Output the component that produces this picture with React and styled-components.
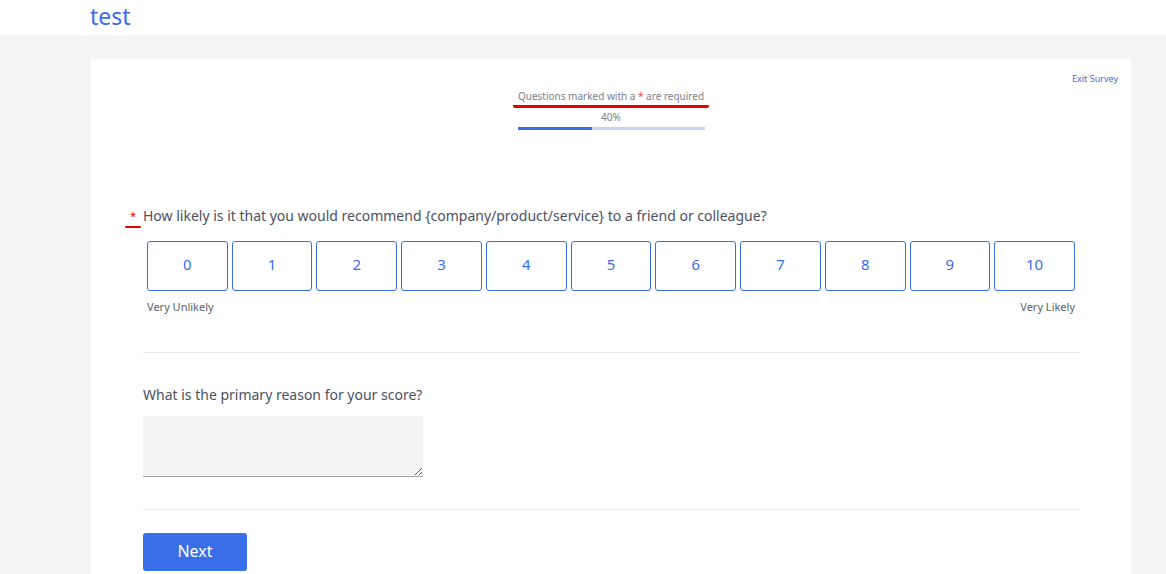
import React from "react";
import styled, { createGlobalStyle } from "styled-components";

const Global = createGlobalStyle`
  html, body { margin: 0; padding: 0; background: #f5f5f5; }
  body { font-family: "Noto Sans", "Open Sans", sans-serif; color: #4b5162; }
  * { box-sizing: border-box; }
`;

const BLUE = "#3a6ee8";

const Header = styled.header`
  height: 35px;
  background: #fff;
  padding-left: 90px;
  display: flex;
  align-items: center;
`;

const Title = styled.h1`
  margin: 0;
  font-size: 23px;
  font-weight: 400;
  color: ${BLUE};
  line-height: 1;
  margin-top: -3px;
`;

const Main = styled.main`
  padding: 24px 35px 0 91px;
`;

const Card = styled.section`
  background: #fff;
  min-height: 520px;
  position: relative;
  padding: 30px 52px 0 52px;
`;

const ExitLink = styled.a`
  position: absolute;
  top: 13px;
  right: 13px;
  font-size: 9px;
  color: ${BLUE};
  text-decoration: none;
`;

const Progress = styled.div`
  display: flex;
  flex-direction: column;
  align-items: center;
`;

const Required = styled.div`
  font-size: 10px;
  color: #7d828d;
  padding: 0 5px 2px;
  border-bottom: 3px solid #e80000;
  border-radius: 2px;
  line-height: 14px;
`;

const Star = styled.span`
  color: #e84a4a;
`;

const Percent = styled.div`
  font-size: 10px;
  color: #7d828d;
  margin-top: 2px;
  line-height: 14px;
`;

const Track = styled.div`
  width: 187px;
  height: 3px;
  background: #c3d4f6;
  margin-top: 3px;
`;

const Fill = styled.div`
  height: 100%;
  background: ${BLUE};
`;

const Question = styled.div`
  margin-top: 76px;
`;

const QLabel = styled.div`
  font-size: 14px;
  line-height: 20px;
  color: #4b5162;
  position: relative;
  margin-top: ${(p) => p.$top || 0}px;
`;

const ReqMark = styled.span`
  position: absolute;
  left: -18px;
  top: 3px;
  width: 16px;
  text-align: center;
  color: #e80000;
  font-size: 11px;
  line-height: 14px;
  &::after {
    content: "";
    position: absolute;
    left: 0;
    right: 0;
    top: 17px;
    height: 2px;
    border-radius: 1px;
    background: #e80000;
  }
`;

const Scale = styled.div`
  margin: 15px 4px 0;
  display: grid;
  grid-template-columns: repeat(11, 1fr);
  gap: 4px;
`;

const ScaleButton = styled.button`
  height: 50px;
  border: 1px solid ${BLUE};
  border-radius: 3px;
  background: #fff;
  color: ${BLUE};
  font-family: inherit;
  font-size: 15px;
  line-height: 1;
  cursor: pointer;
  padding: 0 0 3px;
`;

const ScaleLabels = styled.div`
  display: flex;
  justify-content: space-between;
  margin: 8px 4px 0;
  font-size: 11px;
  color: #5b606c;
`;

const Divider = styled.hr`
  border: 0;
  border-top: 1px solid #e9e9e9;
  margin: ${(p) => p.$top}px 0 0;
`;

const Textarea = styled.textarea`
  display: block;
  width: 280px;
  height: 61px;
  margin-top: 11px;
  background: #f3f3f3;
  border: 0;
  border-bottom: 1px solid #a8a8a8;
  resize: both;
  font-family: inherit;
`;

const NextButton = styled.button`
  margin-top: 23px;
  width: 104px;
  height: 38px;
  border: 0;
  border-radius: 3px;
  background: ${BLUE};
  color: #fff;
  font-family: inherit;
  font-size: 16px;
  line-height: 1;
  padding: 0 0 2px;
  cursor: pointer;
`;

export default function App() {
  const values = Array.from({ length: 11 }, (_, i) => i);
  const pct = 40;
  return (
    <>
      <Global />
      <Header>
        <Title>test</Title>
      </Header>
      <Main>
        <Card>
          <ExitLink href="#">Exit Survey</ExitLink>
          <Progress>
            <Required>
              Questions marked with a <Star>*</Star> are required
            </Required>
            <Percent>{pct}%</Percent>
            <Track>
              <Fill style={{ width: `${pct}%` }} />
            </Track>
          </Progress>
          <Question>
            <QLabel>
              <ReqMark>*</ReqMark>
              How likely is it that you would recommend {"{company/product/service}"} to a friend or colleague?
            </QLabel>
            <Scale>
              {values.map((v) => (
                <ScaleButton key={v}>{v}</ScaleButton>
              ))}
            </Scale>
            <ScaleLabels>
              <span>Very Unlikely</span>
              <span>Very Likely</span>
            </ScaleLabels>
          </Question>
          <Divider $top={38} />
          <QLabel $top={32}>What is the primary reason for your score?</QLabel>
          <Textarea />
          <Divider $top={32} />
          <NextButton>Next</NextButton>
        </Card>
      </Main>
    </>
  );
}
